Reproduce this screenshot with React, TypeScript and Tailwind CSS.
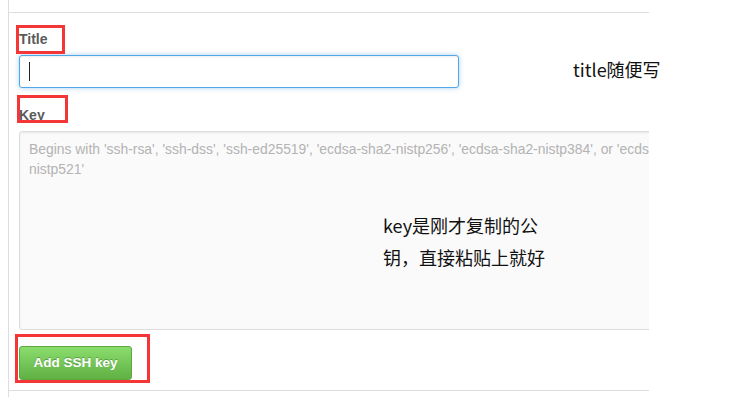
import React from 'react';

const placeholder =
  "Begins with 'ssh-rsa', 'ssh-dss', 'ssh-ed25519', 'ecdsa-sha2-nistp256', 'ecdsa-sha2-nistp384', or 'ecdsa-sha2-\nnistp521'";

export default function App() {
  return (
    <div className="relative w-[743px] h-[417px] bg-white overflow-hidden font-['Liberation_Sans',Arial,sans-serif]">
      {/* Form panel, clipped on the right */}
      <div className="ml-[8px] w-[641px] h-[397px] border-l border-[#dddddd] overflow-hidden pt-[12px]">
        <form className="flex flex-col items-start border-y border-[#dddddd] pl-[10px] pt-[16px] pb-[10px]">
          <div className="flex flex-col gap-[6px]">
            <label className="h-[20px] leading-[20px] text-[14px] font-bold text-[#5a5a5a]">Title</label>
            <div className="relative w-[440px] h-[33px]">
              <input
                type="text"
                className="w-full h-full rounded-[3px] border border-[#51a7e8] bg-white px-[9px] text-[14px] outline-none shadow-[0_0_5px_rgba(81,167,232,0.5),inset_0_1px_2px_rgba(0,0,0,0.075)]"
              />
              {/* caret */}
              <span className="absolute left-[10px] top-[7px] w-px h-[19px] bg-[#222]" />
            </div>
          </div>

          <div className="flex flex-col gap-[6px] mt-[17px]">
            <label className="h-[20px] leading-[20px] text-[14px] font-bold text-[#5a5a5a]">Key</label>
            <textarea
              placeholder={placeholder}
              className="block w-[720px] h-[199px] resize-none rounded-[3px] border border-[#dddddd] bg-[#fafafa] px-[9px] py-[7px] text-[13.9px] leading-[20px] text-[#333] outline-none shadow-[inset_0_1px_2px_rgba(0,0,0,0.075)] placeholder:text-[#b3b3b3] whitespace-pre overflow-hidden"
            />
          </div>

          <button
            type="button"
            className="mt-[16px] w-[113px] h-[34px] rounded-[3px] border border-[#5ca941] bg-gradient-to-b from-[#8add6d] to-[#60b044] text-[13.5px] font-bold text-white [text-shadow:0_-1px_0_rgba(0,0,0,0.25)]"
          >
            Add SSH key
          </button>
        </form>
      </div>

      {/* Red highlight boxes drawn over the screenshot */}
      <div className="absolute left-[16px] top-[25px] w-[49px] h-[29px] border-[3px] border-[#f43636]" />
      <div className="absolute left-[17px] top-[95px] w-[51px] h-[28px] border-[3px] border-[#f43636]" />
      <div className="absolute left-[15px] top-[334px] w-[135px] h-[49px] border-[3px] border-[#f43636]" />

      {/* Handwritten-style notes */}
      <div className="absolute left-[573px] top-[56px] text-[18px] leading-[26px] text-[#111] font-['Noto_Sans_CJK_SC',sans-serif] whitespace-nowrap">
        title随便写
      </div>
      <div className="absolute left-[383px] top-[209px] flex flex-col text-[18px] leading-[32px] text-[#111] font-['Noto_Sans_CJK_SC',sans-serif] whitespace-nowrap">
        <span>key是刚才复制的公</span>
        <span>钥，直接粘贴上就好</span>
      </div>
    </div>
  );
}
